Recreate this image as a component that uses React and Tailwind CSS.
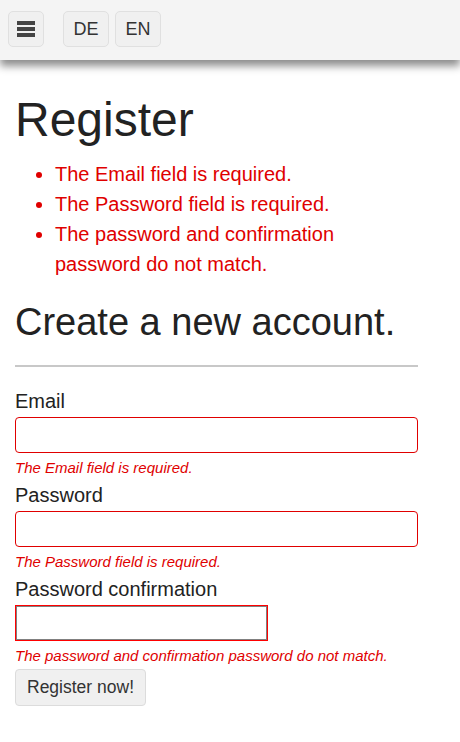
import React from "react";

const font = { fontFamily: '"Liberation Sans", Arial, sans-serif' };

function Field({ label, error }) {
  return (
    <div className="mb-[5px]">
      <div className="h-6 leading-6 text-[20px] text-[#222]">{label}</div>
      <div className="mt-1 h-9 w-full rounded-[4px] border border-[#e00000] bg-white" />
      <div className="mt-[5px] h-5 leading-5 text-[15px] italic text-[#e00000]">{error}</div>
    </div>
  );
}

export default function App() {
  return (
    <div style={font} className="min-h-[742px] w-[460px] bg-white">
      <div className="relative z-10 h-[60px] bg-[#f4f4f4] shadow-[0_6px_8px_rgba(0,0,0,0.45)] flex items-start pt-[11px] pl-2">
        <button className="h-9 w-9 rounded-[5px] border border-[#e0e0e0] bg-[#f0f0f0] flex flex-col items-center justify-center gap-[2px]">
          <span className="block h-[4px] w-[18px] bg-[#444]" />
          <span className="block h-[4px] w-[18px] bg-[#444]" />
          <span className="block h-[4px] w-[18px] bg-[#444]" />
        </button>
        <button className="ml-[19px] h-9 w-[46px] rounded-[5px] border border-[#e0e0e0] bg-[#f0f0f0] text-[18px] text-[#333]">DE</button>
        <button className="ml-[6px] h-9 w-[46px] rounded-[5px] border border-[#e0e0e0] bg-[#f0f0f0] text-[18px] text-[#333]">EN</button>
      </div>
      <div className="ml-[15px] w-[403px]">
        <h1 className="mt-[32px] h-14 leading-[56px] text-[48px] text-[#222]">Register</h1>
        <ul className="mt-[11px] pl-10 list-disc text-[20px] leading-[30px] text-[#e00000] marker:text-[#e00000]">
          <li>The Email field is required.</li>
          <li>The Password field is required.</li>
          <li>The password and confirmation password do not match.</li>
        </ul>
        <h2 className="mt-[21px] h-11 leading-[44px] text-[38px] text-[#222]">Create a new account.</h2>
        <div className="mt-[21px] h-[2px] bg-[#c8c8c8]" />
        <div className="mt-[22px]">
          <Field label="Email" error="The Email field is required." />
          <Field label="Password" error="The Password field is required." />
          <div>
            <div className="h-6 leading-6 text-[20px] text-[#222]">Password confirmation</div>
            <div className="mt-1 h-9 w-[253px] border border-[#ff0000] shadow-[inset_0_0_0_1px_#808080] bg-white" />
            <div className="mt-[5px] h-5 leading-5 text-[15px] italic text-[#e00000]">The password and confirmation password do not match.</div>
          </div>
          <button className="mt-[3px] h-[37px] px-[11px] rounded-[4px] border border-[#dcdcdc] bg-[#f0f0f0] text-[17.5px] text-[#333]">Register now!</button>
        </div>
      </div>
    </div>
  );
}
